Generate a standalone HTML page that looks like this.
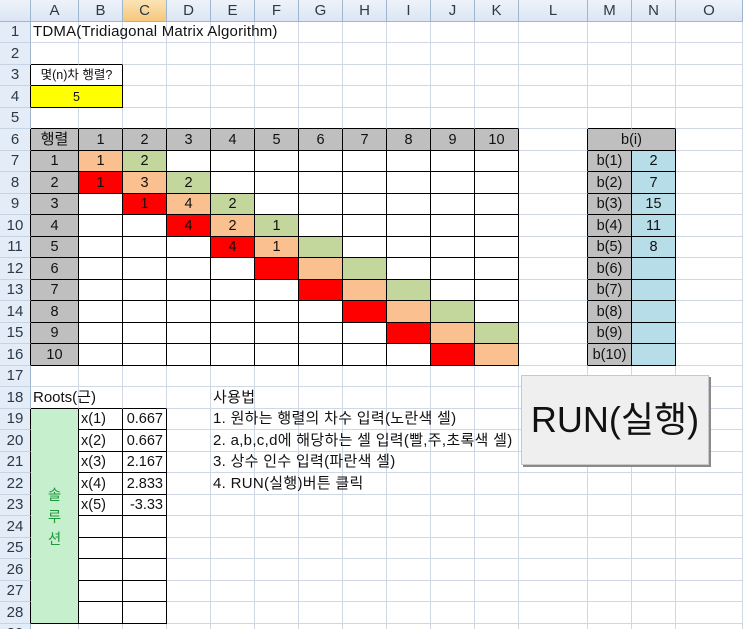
<!DOCTYPE html>
<html><head><meta charset="utf-8">
<style>
html,body{margin:0;padding:0;background:#fff;width:743px;height:629px;overflow:hidden;position:relative}
table{border-collapse:separate;border-spacing:0;table-layout:fixed;width:743px;font-family:"Liberation Sans","Noto Sans CJK KR",sans-serif;font-size:14.5px;color:#111}
td{padding:0;border-right:1px solid #d0d7e5;border-bottom:1px solid #d0d7e5;white-space:nowrap;overflow:visible;text-align:center;line-height:16px;box-sizing:border-box}
tr.a{height:21px}tr.b{height:22px}
td.h{background:#e4ecf7;border-right:1px solid #9eb6ce;border-bottom:1px solid #c5d3e3;color:#2a3a4a;font-size:15px}
tr.hd td{background:linear-gradient(#eef3fa,#dbe5f3);border-right:1px solid #9eb6ce;border-bottom:1px solid #9eb6ce;color:#2a3a4a;font-size:15px;height:22px}
tr.hd td.sel{background:linear-gradient(#fbe3b4,#f6c77c);border-bottom:1px solid #f2a53c}
.k{border-right:1px solid #000!important;border-bottom:1px solid #000!important}
.kr{border-right:1px solid #000!important}
.kb{border-bottom:1px solid #000!important}
.g{background:#bfbfbf}
.p{background:#fac090}
.r{background:#ff0000}
.gr{background:#c3d69b}
.bl{background:#b7dee8}
.lf{text-align:left;padding-left:2px}
.rt{text-align:right;padding-right:3px}
.ins{font-size:15px;letter-spacing:0.3px}
#btn{position:absolute;left:521px;top:375px;width:186px;height:88px;background:#efefef;border:1px solid #c8c8c8;box-shadow:2px 2px 0 #8a8a8a;font-family:"Liberation Sans","Noto Sans CJK KR",sans-serif;font-size:36px;color:#111;text-align:center;line-height:88px}
</style></head><body>
<table>
<colgroup><col style="width:31px"><col style="width:48px"><col style="width:44px"><col style="width:44px"><col style="width:44px"><col style="width:44px"><col style="width:44px"><col style="width:44px"><col style="width:44px"><col style="width:44px"><col style="width:44px"><col style="width:44px"><col style="width:69px"><col style="width:44px"><col style="width:44px"><col style="width:67px"></colgroup>
<tr class="hd"><td></td><td>A</td><td>B</td><td class="sel">C</td><td>D</td><td>E</td><td>F</td><td>G</td><td>H</td><td>I</td><td>J</td><td>K</td><td>L</td><td>M</td><td>N</td><td>O</td></tr>
<tr class="a"><td class="h">1</td><td class="lf" style="font-size:15px;letter-spacing:0.2px">TDMA(Tridiagonal Matrix Algorithm)</td><td></td><td></td><td></td><td></td><td></td><td></td><td></td><td></td><td></td><td></td><td></td><td></td><td></td><td></td></tr>
<tr class="b"><td class="h">2</td><td class="kb"></td><td class="kb"></td><td></td><td></td><td></td><td></td><td></td><td></td><td></td><td></td><td></td><td></td><td></td><td></td><td></td></tr>
<tr class="a"><td class="h kr">3</td><td colspan="2" class="k" style="font-size:12.5px">몇(n)차 행렬?</td><td></td><td></td><td></td><td></td><td></td><td></td><td></td><td></td><td></td><td></td><td></td><td></td><td></td></tr>
<tr class="b"><td class="h kr">4</td><td colspan="2" class="k" style="background:#ffff00;font-size:12.5px">5</td><td></td><td></td><td></td><td></td><td></td><td></td><td></td><td></td><td></td><td></td><td></td><td></td><td></td></tr>
<tr class="a"><td class="h">5</td><td class="kb"></td><td class="kb"></td><td class="kb"></td><td class="kb"></td><td class="kb"></td><td class="kb"></td><td class="kb"></td><td class="kb"></td><td class="kb"></td><td class="kb"></td><td class="kb"></td><td></td><td class="kb"></td><td class="kb"></td><td></td></tr>
<tr class="b"><td class="h kr">6</td><td class="k g" style="font-size:15px">행렬</td><td class="k g">1</td><td class="k g">2</td><td class="k g">3</td><td class="k g">4</td><td class="k g">5</td><td class="k g">6</td><td class="k g">7</td><td class="k g">8</td><td class="k g">9</td><td class="k g">10</td><td class="kr"></td><td colspan="2" class="k g">b(i)</td><td></td></tr>
<tr class="a"><td class="h kr">7</td><td class="k g">1</td><td class="k p">1</td><td class="k gr">2</td><td class="k"></td><td class="k"></td><td class="k"></td><td class="k"></td><td class="k"></td><td class="k"></td><td class="k"></td><td class="k"></td><td class="kr"></td><td class="k g">b(1)</td><td class="k bl">2</td><td></td></tr>
<tr class="b"><td class="h kr">8</td><td class="k g">2</td><td class="k r">1</td><td class="k p">3</td><td class="k gr">2</td><td class="k"></td><td class="k"></td><td class="k"></td><td class="k"></td><td class="k"></td><td class="k"></td><td class="k"></td><td class="kr"></td><td class="k g">b(2)</td><td class="k bl">7</td><td></td></tr>
<tr class="a"><td class="h kr">9</td><td class="k g">3</td><td class="k"></td><td class="k r">1</td><td class="k p">4</td><td class="k gr">2</td><td class="k"></td><td class="k"></td><td class="k"></td><td class="k"></td><td class="k"></td><td class="k"></td><td class="kr"></td><td class="k g">b(3)</td><td class="k bl">15</td><td></td></tr>
<tr class="b"><td class="h kr">10</td><td class="k g">4</td><td class="k"></td><td class="k"></td><td class="k r">4</td><td class="k p">2</td><td class="k gr">1</td><td class="k"></td><td class="k"></td><td class="k"></td><td class="k"></td><td class="k"></td><td class="kr"></td><td class="k g">b(4)</td><td class="k bl">11</td><td></td></tr>
<tr class="a"><td class="h kr">11</td><td class="k g">5</td><td class="k"></td><td class="k"></td><td class="k"></td><td class="k r">4</td><td class="k p">1</td><td class="k gr"></td><td class="k"></td><td class="k"></td><td class="k"></td><td class="k"></td><td class="kr"></td><td class="k g">b(5)</td><td class="k bl">8</td><td></td></tr>
<tr class="b"><td class="h kr">12</td><td class="k g">6</td><td class="k"></td><td class="k"></td><td class="k"></td><td class="k"></td><td class="k r"></td><td class="k p"></td><td class="k gr"></td><td class="k"></td><td class="k"></td><td class="k"></td><td class="kr"></td><td class="k g">b(6)</td><td class="k bl"></td><td></td></tr>
<tr class="a"><td class="h kr">13</td><td class="k g">7</td><td class="k"></td><td class="k"></td><td class="k"></td><td class="k"></td><td class="k"></td><td class="k r"></td><td class="k p"></td><td class="k gr"></td><td class="k"></td><td class="k"></td><td class="kr"></td><td class="k g">b(7)</td><td class="k bl"></td><td></td></tr>
<tr class="b"><td class="h kr">14</td><td class="k g">8</td><td class="k"></td><td class="k"></td><td class="k"></td><td class="k"></td><td class="k"></td><td class="k"></td><td class="k r"></td><td class="k p"></td><td class="k gr"></td><td class="k"></td><td class="kr"></td><td class="k g">b(8)</td><td class="k bl"></td><td></td></tr>
<tr class="a"><td class="h kr">15</td><td class="k g">9</td><td class="k"></td><td class="k"></td><td class="k"></td><td class="k"></td><td class="k"></td><td class="k"></td><td class="k"></td><td class="k r"></td><td class="k p"></td><td class="k gr"></td><td class="kr"></td><td class="k g">b(9)</td><td class="k bl"></td><td></td></tr>
<tr class="b"><td class="h kr">16</td><td class="k g">10</td><td class="k"></td><td class="k"></td><td class="k"></td><td class="k"></td><td class="k"></td><td class="k"></td><td class="k"></td><td class="k"></td><td class="k r"></td><td class="k p"></td><td class="kr"></td><td class="k g">b(10)</td><td class="k bl"></td><td></td></tr>
<tr class="a"><td class="h">17</td><td></td><td></td><td></td><td></td><td></td><td></td><td></td><td></td><td></td><td></td><td></td><td></td><td></td><td></td><td></td></tr>
<tr class="b"><td class="h">18</td><td class="lf kb" style="font-size:15px">Roots(근)</td><td class="kb"></td><td class="kb"></td><td></td><td class="lf ins">사용법</td><td></td><td></td><td></td><td></td><td></td><td></td><td></td><td></td><td></td><td></td></tr>
<tr class="a"><td class="h kr">19</td><td rowspan="10" class="k" style="background:#c6efce;color:#1e9a3a;line-height:22px;padding-top:4px">솔<br>루<br>션</td><td class="k lf">x(1)</td><td class="k rt">0.667</td><td></td><td class="lf ins">1. 원하는 행렬의 차수 입력(노란색 셀)</td><td></td><td></td><td></td><td></td><td></td><td></td><td></td><td></td><td></td><td></td></tr>
<tr class="b"><td class="h kr">20</td><td class="k lf">x(2)</td><td class="k rt">0.667</td><td></td><td class="lf ins">2. a,b,c,d에 해당하는 셀 입력(빨,주,초록색 셀)</td><td></td><td></td><td></td><td></td><td></td><td></td><td></td><td></td><td></td><td></td></tr>
<tr class="a"><td class="h kr">21</td><td class="k lf">x(3)</td><td class="k rt">2.167</td><td></td><td class="lf ins">3. 상수 인수 입력(파란색 셀)</td><td></td><td></td><td></td><td></td><td></td><td></td><td></td><td></td><td></td><td></td></tr>
<tr class="b"><td class="h kr">22</td><td class="k lf">x(4)</td><td class="k rt">2.833</td><td></td><td class="lf ins">4. RUN(실행)버튼 클릭</td><td></td><td></td><td></td><td></td><td></td><td></td><td></td><td></td><td></td><td></td></tr>
<tr class="a"><td class="h kr">23</td><td class="k lf">x(5)</td><td class="k rt">-3.33</td><td></td><td></td><td></td><td></td><td></td><td></td><td></td><td></td><td></td><td></td><td></td><td></td></tr>
<tr class="b"><td class="h kr">24</td><td class="k"></td><td class="k"></td><td></td><td></td><td></td><td></td><td></td><td></td><td></td><td></td><td></td><td></td><td></td><td></td></tr>
<tr class="a"><td class="h kr">25</td><td class="k"></td><td class="k"></td><td></td><td></td><td></td><td></td><td></td><td></td><td></td><td></td><td></td><td></td><td></td><td></td></tr>
<tr class="b"><td class="h kr">26</td><td class="k"></td><td class="k"></td><td></td><td></td><td></td><td></td><td></td><td></td><td></td><td></td><td></td><td></td><td></td><td></td></tr>
<tr class="a"><td class="h kr">27</td><td class="k"></td><td class="k"></td><td></td><td></td><td></td><td></td><td></td><td></td><td></td><td></td><td></td><td></td><td></td><td></td></tr>
<tr class="b"><td class="h kr">28</td><td class="k"></td><td class="k"></td><td></td><td></td><td></td><td></td><td></td><td></td><td></td><td></td><td></td><td></td><td></td><td></td></tr>
<tr class="a"><td class="h">29</td><td></td><td></td><td></td><td></td><td></td><td></td><td></td><td></td><td></td><td></td><td></td><td></td><td></td><td></td><td></td></tr>
</table>
<div id="btn">RUN(실행)</div>
</body></html>
